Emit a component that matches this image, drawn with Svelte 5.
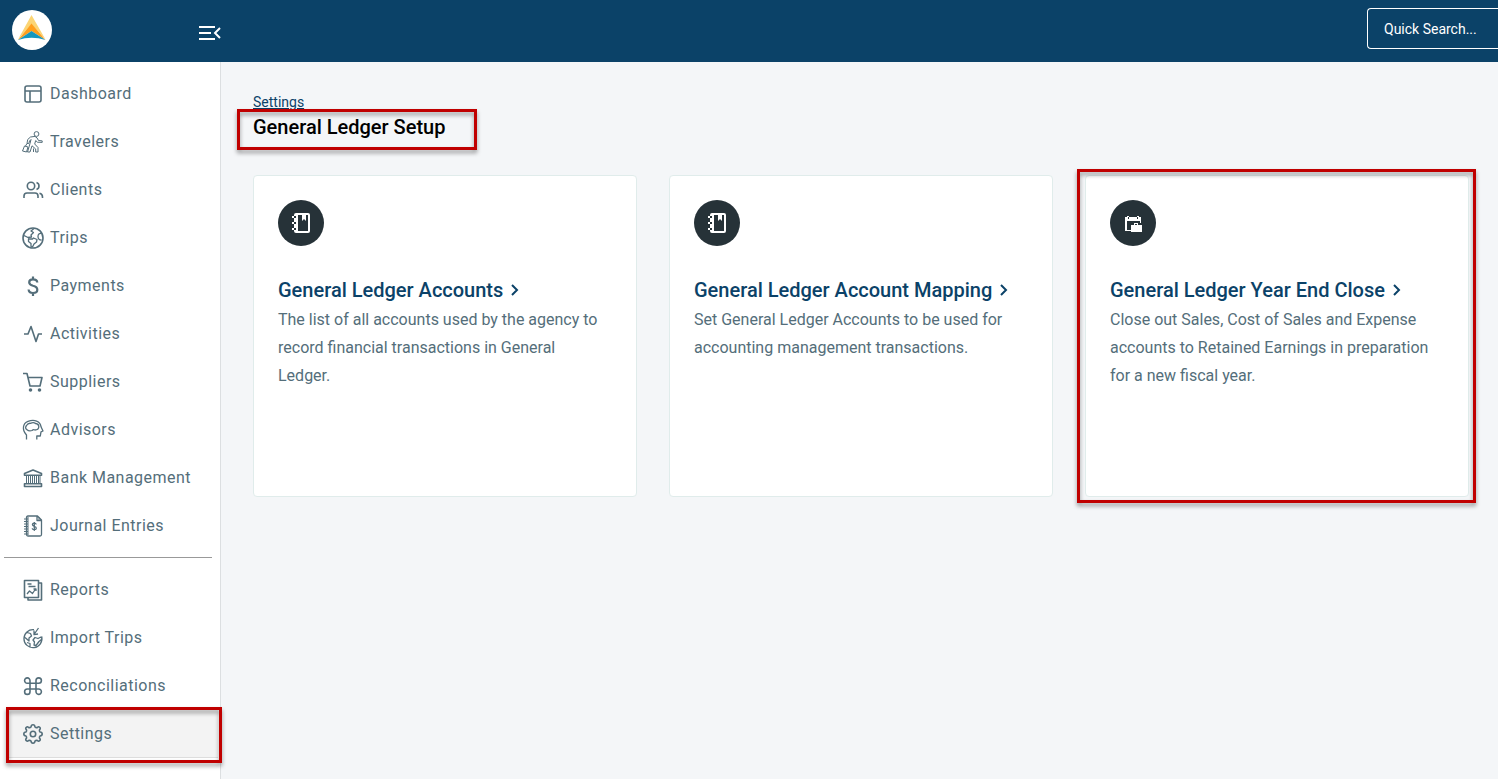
<script lang="ts">
	type NavItem = { label: string; icon: string; active?: boolean };

	const mainItems: NavItem[] = [
		{ label: 'Dashboard', icon: 'dashboard' },
		{ label: 'Travelers', icon: 'traveler' },
		{ label: 'Clients', icon: 'clients' },
		{ label: 'Trips', icon: 'globe' },
		{ label: 'Payments', icon: 'dollar' },
		{ label: 'Activities', icon: 'activity' },
		{ label: 'Suppliers', icon: 'cart' },
		{ label: 'Advisors', icon: 'advisor' },
		{ label: 'Bank Management', icon: 'bank' },
		{ label: 'Journal Entries', icon: 'journal' }
	];

	const toolItems: NavItem[] = [
		{ label: 'Reports', icon: 'report' },
		{ label: 'Import Trips', icon: 'import' },
		{ label: 'Reconciliations', icon: 'command' },
		{ label: 'Settings', icon: 'gear', active: true }
	];

	const cards = [
		{
			title: 'General Ledger Accounts',
			text: 'The list of all accounts used by the agency to record financial transactions in General Ledger.',
			icon: 'book'
		},
		{
			title: 'General Ledger Account Mapping',
			text: 'Set General Ledger Accounts to be used for accounting management transactions.',
			icon: 'book'
		},
		{
			title: 'General Ledger Year End Close',
			text: 'Close out Sales, Cost of Sales and Expense accounts to Retained Earnings in preparation for a new fiscal year.',
			icon: 'calendar',
			marked: true
		}
	];

	let search = $state('');
	let collapsed = $state(false);
</script>

{#snippet navIcon(name: string)}
	<svg class="nav-icon" viewBox="0 0 22 22" aria-hidden="true">
		{#if name === 'dashboard'}
			<rect x="3" y="3" width="16" height="16" rx="2" />
			<path d="M3 8h16M8 8v11" />
		{:else if name === 'traveler'}
			<g class="thin">
				<circle cx="14.5" cy="3" r="2.400" />
				<path d="M8.500 6l4.500-.6 2 1.500 1.500 2.600 3.700.4v1.500l-4.800-.2-1.700-1.700-1 3.500 3.300 3.500v4.500h-2.300V18l-3.700-3.200-2 6.200H5.500L8 12.500 9 8.500 7.500 10l-.7 2.500H5l.7-4z" />
				<path d="M5 12.500L3.500 15M2.500 15l3.500 1-1.500 5-4-1zM11.500 17.500V21" />
			</g>
		{:else if name === 'clients'}
			<circle cx="9" cy="7" r="3.700" />
			<path d="M2 19v-2q0-3 3-3h8q3 0 3 3v2M14.500 3.500a3.700 3.700 0 0 1 0 7M17.500 14.200q3 .6 3 3.800v1" />
		{:else if name === 'globe'}
			<circle cx="11" cy="11" r="10" />
			<path class="medium" d="M12 1.500L9 4l2.500 1.500L9 8l.5 2-3.500.5-4-2M6.500 12h4l1-1 3.500 1.500-.5 2.500-2.500 2-1.500 3-1.500-.5v-3l-2.500-2zM19.500 6.500Q16 6 16 9.500t3.500 3.500" />
		{:else if name === 'dollar'}
			<path class="bold" d="M15.300 7.500Q15 4.300 11 4.300q-3.800 0-3.800 2.900 0 2.500 3.800 3.500 4.300 1 4.300 4 0 3.300-4.300 3.300-4.200 0-4.400-3.500M11 1.500v3M11 18v3" />
		{:else if name === 'activity'}
			<path d="M2 11h4L9 3.500l5 15 2.500-7.500H20" />
		{:else if name === 'cart'}
			<path d="M1 2.500h4L8 15h10l2-8.500H5.800" />
			<circle class="solid" cx="8.500" cy="19" r="1" />
			<circle class="solid" cx="17.500" cy="19" r="1" />
		{:else if name === 'advisor'}
			<path class="medium" d="M4.500 20.500V16C-.5 10.500 1 4 6 2.300c6-2 12.500-.5 13 5.500l2 4.200-2 .8-.7 4.200h-3.500V20.500" />
			<path class="medium" d="M5 10.700Q2.500 9 4.500 6.500q1.500-2.500 4-2.200 3-1.500 5 .2 3.500.5 3.300 3.500-.3 3-3.800 3-1.500-1-3 .5Q7 12.500 5 10.700z" />
		{:else if name === 'bank'}
			<path d="M2.500 6.500L11 3l8.500 3.500v1.800h-17zM2.500 16.800h17v2.700h-17z" />
			<path class="thin" d="M4.500 8.500V17M6.500 8.500V17M8.500 8.500V17M10.500 8.500V17M12.500 8.500V17M14.500 8.500V17M16.500 8.500V17M18 8.500V17" />
		{:else if name === 'journal'}
			<path class="medium" d="M15.500 1H6Q4.500 1 4.500 2.500v17Q4.500 21 6 21h12q1.500 0 1.500-1.500V5zM15 1.500v4h4.500" />
			<path class="thin" d="M17 2v3M6 2v18M2 4h4M2 6.500h4M2 9h4M2 11.500h4M2 14h4M2 16.500h4M2 19h4" />
			<path class="medium" d="M14.200 9.500q-.2-1.300-1.900-1.300-1.900 0-1.900 1.400t1.900 1.700q2 .4 2 1.900t-2 1.500q-2 0-2.100-1.500M12.300 7V16" />
		{:else if name === 'report'}
			<path d="M2.500 1.500h14v17h-14zM17 4h2.500v17H6v-2" />
			<path class="medium" d="M5.500 5h4M6.500 7.500h7M5 15l2.500-3 3 2.500 3-4.500M11.500 10h2.500v2" />
		{:else if name === 'import'}
			<path class="medium" d="M12 2.700A9 9 0 1 0 19.700 9.500M5 5.500l3.500 1 1 2.500L7 11v3l-4-3.500M5 15.500l3 1v4M11 13l2-2.500 3 1 3-1.500 1 2-3 2.500-3 4-2-.5.500-3zM16.500 1L12 7.500M12 3.500v4.200l4-.7" />
		{:else if name === 'command'}
			<path d="M8 8V5.700A2.700 2.700 0 1 0 5.300 8.300h11.400A2.700 2.700 0 1 0 14 5.600v11A2.700 2.700 0 1 0 16.700 14H5.300A2.700 2.700 0 1 0 8 16.700z" />
		{:else if name === 'gear'}
			<circle cx="11" cy="11" r="2.700" />
			<path d="M9 4q.2-2.200 2-2.200T13 4q1 1 2.500.4 1-1.300 2.200-.1t-.1 2.300Q17 8 18 9q2.200.2 2.200 2T18 13q-1 1-.4 2.400 1.300 1.200.1 2.300t-2.200-.1Q14 17 13 18q-.2 2.200-2 2.200T9 18q-1-1-2.500-.4-1 1.200-2.200.1t.1-2.300Q5 14 4 13q-2.200-.2-2.200-2T4 9q1-1 .4-2.400-1.300-1.200-.1-2.300t2.200.1Q8 5 9 4z" />
		{/if}
	</svg>
{/snippet}

{#snippet navList(items: NavItem[])}
	<ul>
		{#each items as item}
			<li>
				<a href="#{item.icon}" class="nav-link" class:active={item.active} class:marked={item.active}>
					{@render navIcon(item.icon)}
					<span>{item.label}</span>
				</a>
			</li>
		{/each}
	</ul>
{/snippet}

<div class="app">
	<header>
		<div class="brand">
			<a href="#home" class="logo" aria-label="Home">
				<svg viewBox="0 0 40 40" aria-hidden="true">
					<circle cx="20" cy="20" r="20" fill="#fff" />
					<path d="M19.500 5L6 29.500 19.500 14 33.500 29.500z" fill="#fbd575" />
					<path d="M19.500 13.500L6 30l13.500-9 14 9z" fill="#ff9f1c" />
					<path d="M19.500 21L6 30q13.500-4.500 27.500 0z" fill="#1697bd" />
				</svg>
			</a>
			<button class="toggle" aria-label="Toggle menu" onclick={() => (collapsed = !collapsed)}>
				<svg viewBox="0 0 22 14" aria-hidden="true">
					<path d="M0 1h16M0 7h12M0 13h16M21 2l-5 5 5 5" />
				</svg>
			</button>
		</div>
		<input class="search" type="search" aria-label="Quick Search" placeholder="Quick Search..." bind:value={search} />
	</header>

	<div class="body">
		<nav class:collapsed>
			{@render navList(mainItems)}
			<hr />
			{@render navList(toolItems)}
		</nav>

		<main>
			<a class="crumb" href="#settings">Settings</a>
			<h1 class="marked">General Ledger Setup</h1>

			<div class="cards">
				{#each cards as card}
					<article class="card" class:marked={card.marked}>
						<div class="badge">
							<svg viewBox="0 0 22 22" aria-hidden="true">
								{#if card.icon === 'book'}
									<path fill="#fff" fill-rule="evenodd" d="M6 1h12q2 0 2 2v16q0 2-2 2H6q-2 0-2-2v-1H2v-2h2v-4H2v-2h2V6H2V4h2V3q0-2 2-2zM8 3v16h10V3h-2v6l-2-2-2 2V3zM4 4v2h2V4zM4 10v2h2v-2zM4 16v2h2v-2z" />
								{:else}
									<path fill="#fff" fill-rule="evenodd" d="M3 5h2V4h2v1h8V4h2v1h2v6h-1V9H5v9h4v1H3zM6 5v2h1V5zM15 5v2h1V5zM12 13v-2h4v2h4v7H9v-7zM13 13h2v-1h-2z" />
								{/if}
							</svg>
						</div>
						<h2>
							<a href="#{card.icon}">
								{card.title}
								<svg class="chevron" viewBox="0 0 8 12" aria-hidden="true"><path d="M1 1l5 5-5 5" /></svg>
							</a>
						</h2>
						<p>{card.text}</p>
					</article>
				{/each}
			</div>
		</main>
	</div>
</div>

<style>
	:global(body) {
		margin: 0;
		background: #f4f6f8;
		font-family: Roboto, 'Liberation Sans', sans-serif;
	}

	.app {
		display: flex;
		flex-direction: column;
		min-height: 100vh;
	}

	header {
		display: flex;
		justify-content: space-between;
		align-items: flex-start;
		box-sizing: border-box;
		height: 62px;
		padding: 8px 0 0 12px;
		background: #0b4268;
	}

	.brand {
		display: flex;
		justify-content: space-between;
		width: 209px;
		padding-top: 2px;
	}

	.logo svg {
		display: block;
		width: 40px;
		height: 40px;
	}

	.toggle {
		display: flex;
		align-items: center;
		height: 46px;
		padding: 0;
		border: 0;
		background: none;
		cursor: pointer;
	}

	.toggle svg {
		width: 22px;
		height: 14px;
		fill: none;
		stroke: #fff;
		stroke-width: 2;
	}

	.search {
		box-sizing: border-box;
		width: 131px;
		height: 41px;
		padding: 0 0 0 16px;
		border: 1px solid #fff;
		border-right: 0;
		border-radius: 4px 0 0 4px;
		background: transparent;
		color: #fff;
		font: 400 14px Roboto, 'Liberation Sans', sans-serif;
	}

	.search::placeholder {
		color: #fff;
		opacity: 1;
	}

	.body {
		display: flex;
		flex: 1;
	}

	nav {
		flex: none;
		box-sizing: border-box;
		width: 221px;
		padding-top: 8px;
		border-right: 1px solid #dcdfe1;
		background: #fff;
	}

	nav.collapsed {
		width: 56px;
		overflow: hidden;
	}

	ul {
		margin: 0;
		padding: 0 2px 0 6px;
		list-style: none;
	}

	hr {
		height: 1px;
		margin: 7px 8px 8px 4px;
		border: 0;
		background: #999;
	}

	.nav-link {
		display: flex;
		align-items: center;
		gap: 6px;
		box-sizing: border-box;
		height: 48px;
		padding-left: 16px;
		color: #546e7a;
		font-size: 16px;
		line-height: 24px;
		letter-spacing: 0.03em;
		text-decoration: none;
		white-space: nowrap;
	}

	.nav-link.active {
		background: #f3f3f3;
		border-bottom: 1px solid #ddd;
	}

	.nav-icon {
		flex: none;
		width: 22px;
		height: 22px;
		fill: none;
		stroke: #546e7a;
		stroke-width: 1.6;
		stroke-linejoin: round;
	}

	.nav-icon .thin {
		stroke-width: 1;
	}

	.nav-icon .medium {
		stroke-width: 1.3;
	}

	.nav-icon .bold {
		stroke-width: 2.2;
	}

	.nav-icon .solid {
		fill: #546e7a;
	}

	main {
		flex: 1;
		padding: 32px 29px 32px 32px;
	}

	.crumb {
		display: block;
		width: fit-content;
		color: #0b4268;
		font-size: 14px;
		line-height: 16px;
	}

	h1 {
		width: fit-content;
		margin: 5px 0 36px;
		color: #000;
		font-size: 20px;
		font-weight: 500;
		line-height: 24px;
	}

	.cards {
		display: grid;
		grid-template-columns: repeat(3, 1fr);
		gap: 32px;
	}

	.card {
		box-sizing: border-box;
		min-height: 322px;
		padding: 24px;
		border: 1px solid #e0eceb;
		border-radius: 4px;
		background: #fff;
	}

	.badge {
		display: flex;
		align-items: center;
		justify-content: center;
		width: 46px;
		height: 46px;
		border-radius: 50%;
		background: #263238;
	}

	.badge svg {
		width: 22px;
		height: 22px;
	}

	h2 {
		margin: 30px 0 2px;
		font-size: 20px;
		font-weight: 500;
		line-height: 28px;
	}

	h2 a {
		display: flex;
		align-items: center;
		gap: 8px;
		color: #0b4268;
		text-decoration: none;
	}

	.chevron {
		width: 8px;
		height: 12px;
		fill: none;
		stroke: #0b4268;
		stroke-width: 2;
	}

	p {
		margin: 0;
		padding-right: 4px;
		color: #546e7a;
		font-size: 16px;
		line-height: 28px;
	}

	/* red callout frames drawn over the page */
	.marked {
		position: relative;
	}

	.marked::after {
		content: '';
		position: absolute;
		inset: -7px -8px -7px -9px;
		border: 3px solid #c00000;
		filter: drop-shadow(0 3px 2px rgba(0, 0, 0, 0.4));
		pointer-events: none;
	}

	h1.marked::after {
		inset: -6px -32px -11px -16px;
	}

	.nav-link.marked::after {
		inset: -3px -4px -6px 0;
	}
</style>
